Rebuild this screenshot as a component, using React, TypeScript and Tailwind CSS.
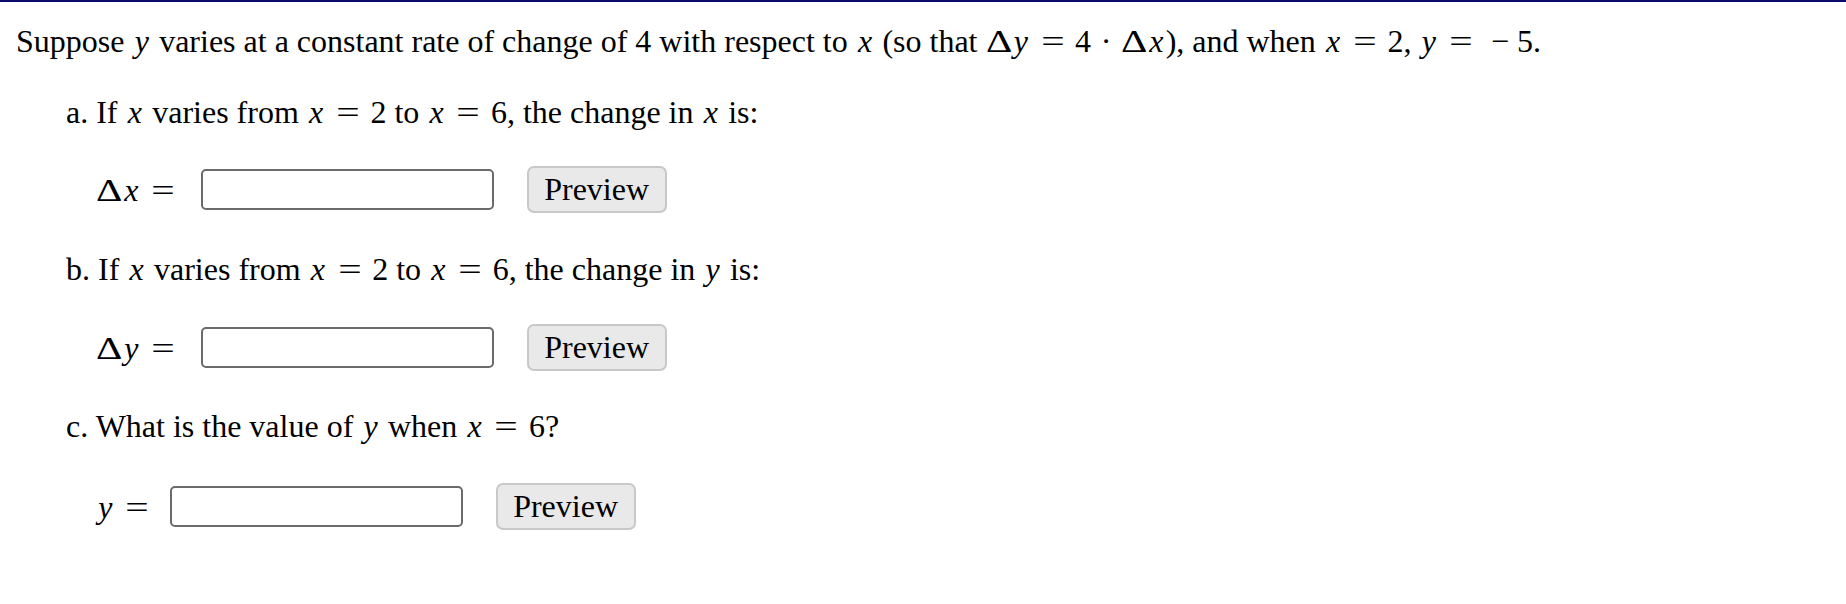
import React from "react";

const V = ({ children }: { children: React.ReactNode }) => (
  <span className="italic px-[0.07em]">{children}</span>
);

const D = () => (
  <span className="inline-block origin-left scale-x-[1.28] pr-[0.17em]">Δ</span>
);

const Eq = () => (
  <span className="mx-[0.42em] inline-block scale-x-[1.3]">=</span>
);

const PreviewRow = ({ label, narrow }: { label: React.ReactNode; narrow?: boolean }) => (
  <div className="flex items-center h-[47px] pl-[30px]">
    <span className="whitespace-nowrap">{label}</span>
    <input
      type="text"
      className={
        narrow
          ? "ml-[10px] w-[293px] h-[41px] border-2 border-[#6a6a6a] rounded-[5px] bg-white outline-none"
          : "ml-[15px] w-[293px] h-[41px] border-2 border-[#6a6a6a] rounded-[5px] bg-white outline-none"
      }
    />
    <button className="ml-[33px] w-[140px] h-[47px] bg-[#e9e9e9] border-2 border-[#c8c8c8] rounded-[7px] text-black leading-none pb-[1px]">
      Preview
    </button>
  </div>
);

export default function App() {
  return (
    <div
      className="min-h-[604px] w-full bg-white border-t-2 border-[#0a0a6b] text-black text-[32px]"
      style={{ fontFamily: '"Liberation Serif", "Times New Roman", serif' }}
    >
      <div className="pl-[16px] pt-[19px]">
        <p className="leading-[40px] h-[40px] whitespace-nowrap">
          Suppose <V>y</V> varies at a constant rate of change of 4 with respect to <V>x</V> (so that <D />
          <V>y</V>
          <Eq />4<span className="mx-[0.3em]">·</span>
          <D />
          <V>x</V>), and when <V>x</V>
          <Eq />2, <V>y</V>
          <Eq /> <span className="mr-[0.25em]">−</span>5.
        </p>
        <div className="pl-[50px]">
          <p className="mt-[31px] leading-[40px] h-[40px] whitespace-nowrap">
            a. If <V>x</V> varies from <V>x</V>
            <Eq />2 to <V>x</V>
            <Eq />6, the change in <V>x</V> is:
          </p>
          <div className="mt-[34px]">
            <PreviewRow
              label={
                <>
                  <D />
                  <V>x</V>
                  <Eq />
                </>
              }
            />
          </div>
          <p className="mt-[36px] leading-[40px] h-[40px] whitespace-nowrap">
            b. If <V>x</V> varies from <V>x</V>
            <Eq />2 to <V>x</V>
            <Eq />6, the change in <V>y</V> is:
          </p>
          <div className="mt-[35px]">
            <PreviewRow
              label={
                <>
                  <D />
                  <V>y</V>
                  <Eq />
                </>
              }
            />
          </div>
          <p className="mt-[35px] leading-[40px] h-[40px] whitespace-nowrap">
            c. What is the value of <V>y</V> when <V>x</V>
            <Eq />6?
          </p>
          <div className="mt-[37px]">
            <PreviewRow
              narrow
              label={
                <>
                  <V>y</V>
                  <Eq />
                </>
              }
            />
          </div>
        </div>
      </div>
    </div>
  );
}
